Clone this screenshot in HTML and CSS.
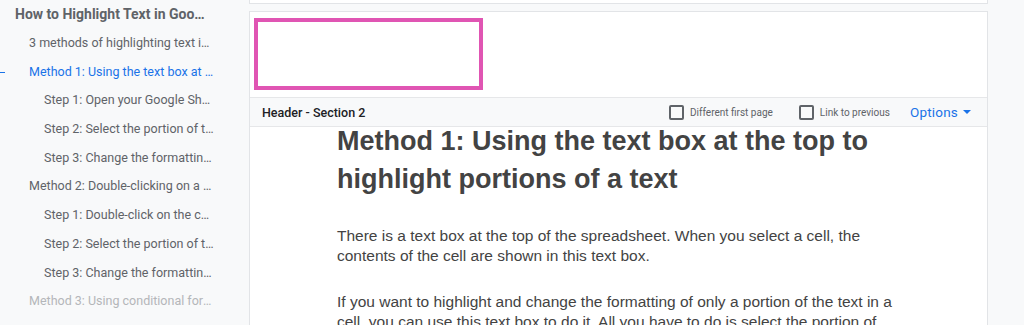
FILE: index.html
```html
<!DOCTYPE html>
<html lang="en">
<head>
    <meta charset="UTF-8">
    <title>How to Highlight Text in Google Sheets</title>
    <link rel="stylesheet" href="styles.css">
</head>
<body>
    <div class="layout">
        <nav class="outline">
            <div class="outline-title">How to Highlight Text in Google Sheets</div>
            <div class="outline-item level-1"><span class="label">3 methods of highlighting text in Google Sheets</span></div>
            <div class="outline-item level-1 current"><span class="label">Method 1: Using the text box at the top to highlight portions of a text</span></div>
            <div class="outline-item level-2"><span class="label">Step 1: Open your Google Sheets spreadsheet</span></div>
            <div class="outline-item level-2"><span class="label">Step 2: Select the portion of the text</span></div>
            <div class="outline-item level-2"><span class="label">Step 3: Change the formatting of the text</span></div>
            <div class="outline-item level-1"><span class="label">Method 2: Double-clicking on a cell</span></div>
            <div class="outline-item level-2"><span class="label">Step 1: Double-click on the cell with the text</span></div>
            <div class="outline-item level-2"><span class="label">Step 2: Select the portion of the text</span></div>
            <div class="outline-item level-2"><span class="label">Step 3: Change the formatting of the text</span></div>
            <div class="outline-item level-1 faded"><span class="label">Method 3: Using conditional formatting</span></div>
        </nav>

        <main class="canvas">
            <div class="prev-page"></div>
            <div class="page">
                <div class="page-top">
                    <div class="image-frame"></div>
                </div>
                <div class="header-bar">
                    <span class="header-label">Header - Section 2</span>
                    <label class="check"><span class="box"></span>Different first page</label>
                    <label class="check"><span class="box"></span>Link to previous</label>
                    <span class="options">Options <span class="caret"></span></span>
                </div>
                <div class="page-body">
                    <h2>Method 1: Using the text box at the top to highlight portions of a text</h2>
                    <p>There is a text box at the top of the spreadsheet. When you select a cell, the contents of the cell are shown in this text box.</p>
                    <p>If you want to highlight and change the formatting of only a portion of the text in a cell, you can use this text box to do it. All you have to do is select the portion of the text you want to change.</p>
                </div>
            </div>
        </main>
    </div>
</body>
</html>
```

FILE: styles.css
```css
body {
    margin: 0;
    background-color: #f8f9fa;
    font-family: Roboto, "Liberation Sans", sans-serif;
    overflow: hidden;
    height: 325px;
}
.layout {
    display: flex;
    height: 325px;
    overflow: hidden;
}

/* Outline */
.outline {
    width: 249px;
    flex-shrink: 0;
    padding-top: 4px;
}
.outline-title {
    margin-left: 15px;
    width: 196px;
    font-size: 14px;
    font-weight: 700;
    color: #5f6368;
    line-height: 20px;
    white-space: nowrap;
    overflow: hidden;
    text-overflow: ellipsis;
    margin-bottom: 9px;
}
.outline-item {
    position: relative;
    font-size: 12.5px;
    color: #5f6368;
    line-height: 20px;
    height: 20px;
    margin-bottom: 8.7px;
}
.outline-item .label {
    display: block;
    white-space: nowrap;
    overflow: hidden;
    text-overflow: ellipsis;
}
.outline-item.level-1 {
    margin-left: 29px;
    width: 186px;
}
.outline-item.level-2 {
    margin-left: 44px;
    width: 171px;
}
.outline-item.current {
    color: #1a73e8;
}
.outline-item.current::before {
    content: '';
    position: absolute;
    left: -29px;
    top: 10px;
    width: 5px;
    height: 1px;
    background-color: #1a73e8;
}
.outline-item.faded {
    color: #b4b6b9;
}

/* Page area */
.canvas {
    width: 739px;
    flex-shrink: 0;
}
.prev-page {
    height: 3px;
    background-color: #fff;
    border: 1px solid #e2e4e7;
    border-top: none;
    margin-bottom: 7px;
}
.page {
    background-color: #fff;
    border: 1px solid #e2e4e7;
    height: 400px;
}
.page-top {
    height: 85px;
    padding: 6px 0 0 4px;
    box-sizing: border-box;
}
.image-frame {
    width: 221px;
    height: 64px;
    border: 4px solid #e055b3;
}
.header-bar {
    display: flex;
    align-items: center;
    height: 28px;
    background-color: #f8f9fa;
    border-top: 1px solid #e6e7e9;
    border-bottom: 1px solid #e6e7e9;
    padding-left: 12px;
    font-size: 12px;
    color: #3c4043;
}
.header-label {
    font-weight: 500;
    font-size: 12.5px;
    color: #202124;
    margin-right: auto;
    padding-top: 1px;
}
.check {
    display: flex;
    align-items: center;
    font-size: 10px;
    color: #5f6368;
    margin-right: 26px;
}
.check .box {
    width: 11px;
    height: 11px;
    border: 2px solid #5f6368;
    border-radius: 2px;
    margin-right: 6px;
}
.check + .check {
    margin-right: 20px;
}
.options {
    font-size: 13.5px;
    color: #1a73e8;
    margin-right: 16px;
    display: flex;
    align-items: center;
    letter-spacing: 0.2px;
}
.caret {
    width: 0;
    height: 0;
    border-left: 4px solid transparent;
    border-right: 4px solid transparent;
    border-top: 4px solid #1a73e8;
    margin-left: 5px;
}
.page-body {
    padding: 0 90px 0 87px;
    font-family: "Liberation Sans", Arial, sans-serif;
    color: #434343;
}
.page-body h2 {
    font-size: 27px;
    line-height: 38px;
    font-weight: 700;
    margin: -5px 0 28px;
    color: #434343;
}
.page-body p {
    font-size: 15.5px;
    line-height: 20px;
    margin: 0 0 26px;
}
```
